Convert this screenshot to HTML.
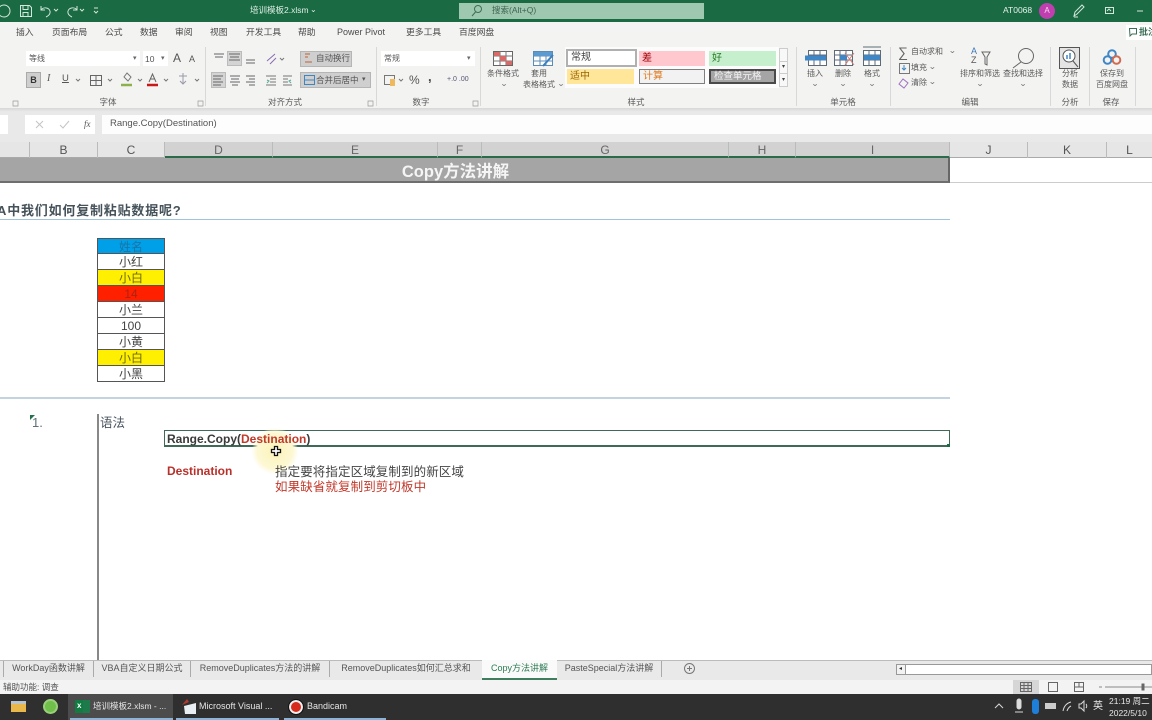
<!DOCTYPE html>
<html lang="zh"><head><meta charset="utf-8"><title>培训模板2.xlsm</title>
<style>
*{box-sizing:border-box}
html,body{margin:0;padding:0;width:1152px;height:720px;overflow:hidden;background:#fff}
body{position:relative;font-family:"Liberation Sans","Noto Sans CJK SC",sans-serif;color:#444}
.a{position:absolute;white-space:nowrap}
.r{position:absolute}
.c{position:absolute;text-align:center;white-space:nowrap}
.l{font-size:8px;line-height:10px;color:#5a5a5a}
.g{font-size:8.5px;line-height:10px;color:#5a5a5a;top:97px}
.ar{font-size:8px;line-height:10px;color:#777;transform:scaleX(1.2)}
.tab{font-size:8.8px;color:#4a4a4a;top:26px;line-height:12px}
.hd{position:absolute;top:142px;height:16px;line-height:16px;text-align:center;font-size:12px;color:#555;border-right:1px solid #bbb}
.sel{background:#d2d2d2;border-bottom:2px solid #2b6b4b;color:#666}
.cell{position:absolute;left:97px;width:68px;height:16px;line-height:16px;text-align:center;font-size:12px;color:#444;border:1px solid #555;border-top:0}
.st{position:absolute;height:15px;line-height:15px;font-size:10px;padding-left:3px}
svg{position:absolute;overflow:visible}
.sheet{position:absolute;top:661px;height:16px;line-height:14px;font-size:9px;color:#555;border-right:1px solid #aaa;text-align:center;white-space:nowrap}
</style></head><body>

<!-- title bar -->
<div class="r" style="left:0;top:0;width:1152px;height:22px;background:#1a6b43"></div>
<div class="a" style="left:250px;top:5px;font-size:8.5px;line-height:11px;color:#dfeee6">培训模板2.xlsm</div>
<div class="a" style="left:310px;top:5px;font-size:8px;line-height:10px;color:#dfeee6">⌄</div>
<div class="r" style="left:459px;top:3px;width:245px;height:16px;background:#9ec9b0"></div>
<div class="a" style="left:492px;top:5px;font-size:8.5px;line-height:11px;color:#3f6350">搜索(Alt+Q)</div>
<div class="a" style="left:1003px;top:5px;font-size:8.5px;line-height:11px;color:#e6f1eb">AT0068</div>
<div class="c" style="left:1039px;top:3px;width:16px;height:16px;border-radius:50%;background:#c03fb0;color:#f3d8ef;font-size:8px;line-height:16px">A</div>

<!-- ribbon bg -->
<div class="r" style="left:0;top:22px;width:1152px;height:86px;background:#f3f3f2"></div>
<div class="a tab" style="left:16px">插入</div><div class="a tab" style="left:52px">页面布局</div>
<div class="a tab" style="left:105px">公式</div><div class="a tab" style="left:140px">数据</div>
<div class="a tab" style="left:175px">审阅</div><div class="a tab" style="left:210px">视图</div>
<div class="a tab" style="left:246px">开发工具</div><div class="a tab" style="left:298px">帮助</div>
<div class="a tab" style="left:337px;font-size:9px">Power Pivot</div><div class="a tab" style="left:406px">更多工具</div>
<div class="a tab" style="left:459px">百度网盘</div>
<div class="r" style="left:1126px;top:25px;width:26px;height:15px;background:#fff"></div>
<svg style="left:1129px;top:28px" width="9" height="9" fill="none" stroke="#3a6d55"><path d="M.5 .5h7v5.500h-4.500l-2 2z"/></svg>
<div class="a" style="left:1139px;top:27px;font-size:9px;line-height:11px;font-weight:700;color:#3a6d55">批注</div>

<!-- input boxes -->
<div class="r" style="left:26px;top:51px;width:114px;height:15px;background:#fff"></div>
<div class="r" style="left:143px;top:51px;width:25px;height:15px;background:#fff"></div>
<div class="r" style="left:381px;top:51px;width:94px;height:15px;background:#fff"></div>
<div class="r" style="left:565px;top:47px;width:214px;height:41px;background:#fcfcfc"></div>
<div class="r" style="left:26px;top:72px;width:15px;height:16px;background:#cfcfcf;border:1px solid #aaa"></div>
<div class="r" style="left:227px;top:51px;width:15px;height:15px;background:#d4d4d4;border:1px solid #bbb"></div>
<div class="r" style="left:211px;top:72px;width:15px;height:16px;background:#d4d4d4;border:1px solid #bbb"></div>
<div class="r" style="left:300px;top:51px;width:52px;height:16px;background:#cfcfcf;border:1px solid #b5b5b5"></div>
<div class="r" style="left:300px;top:72px;width:71px;height:16px;background:#cfcfcf;border:1px solid #b5b5b5"></div>

<!-- icon layer -->
<svg style="left:0;top:0" width="1152" height="108" fill="none" stroke="#666">
<g stroke="#d5e6dc"><circle cx="4" cy="11" r="6"/><path d="M20.500 5.500h9l2 2v9h-11zM23 5.500v4h5v-4M23 16.500v-4h5v4"/>
<path d="M41 6v4h4M41 10c3-4 10-2 9 3-.5 2-2 3-4 4"/><path d="M54 9l2 2 2-2"/><path d="M77 6v4h-4M77 10c-3-4-10-2-9 3 .5 2 2 3 4 4"/><path d="M80 9l2 2 2-2"/><path d="M94 8h4M94 11l2 2 2-2"/>
<path d="M1074 16l1-4 7-7 2 2-7 7zM1074 17h4"/><rect x="1105.500" y="7.500" width="8" height="6"/><path d="M1107 11l2-2 2 2"/><path d="M1137 11h6"/></g>
<g stroke="#3e6f55"><circle cx="478" cy="9" r="3.500"/><path d="M475.500 12L472 16"/></g>
<!-- separators -->
<path stroke="#d8d8d8" d="M205.500 47v59M376.500 47v59M480.500 47v59M796.500 47v59M890.500 47v59M1050.500 47v59M1089.500 47v59M1135.500 47v59"/>
<!-- corner launchers -->
<path stroke="#999" d="M13 101h5v5h-5zM198 101h5v5h-5zM368 101h5v5h-5zM473 101h5v5h-5z" stroke-width=".7"/>
<!-- font -->
<rect x="90.500" y="75.500" width="11" height="10"/><path d="M96 75v11M90 80.500h12"/>
<path d="M127 73l4 4-3 4-4-4z" stroke="#777"/><path d="M121 85h11" stroke="#8db24c" stroke-width="2.500"/>
<path d="M147 85h11" stroke="#c81818" stroke-width="2.500"/><path d="M149 82l3.500-8 3.500 8M150.500 79h4"/>
<path d="M179 76h8M183 73v11M180 81l3 3 3-3" stroke="#99a"/>
<path d="M76 79l2 2 2-2M108 79l2 2 2-2M138 79l2 2 2-2M164 79l2 2 2-2M195 79l2 2 2-2" stroke="#777"/>
<!-- align -->
<path d="M214 54h10M215 57h8M229 54h11M230 57h9M229 60h11M246 60h9M246 63h9M213 76h10M213 79h8M213 82h10M213 85h8M230 76h10M231 79h8M230 82h10M232 85h6M246 76h9M249 79h6M246 82h9M249 85h6"/>
<path d="M266 76h10M270 79h6M270 82h6M266 85h10M283 76h9M283 79h5M283 82h5M283 85h9" stroke="#777"/><path d="M267 80l2 1-2 2M291 80l-2 1 2 2" stroke="#5a9"/>
<path d="M267 61l8-7M270 64l6-6" stroke="#8a6cb0"/><path d="M280 58l2 2 2-2" stroke="#777"/>
<rect x="304.500" y="75.500" width="10" height="9" stroke="#3f86c0"/><path d="M304 80h11" stroke="#3f86c0"/>
<path d="M305 54h5M305 57h3M305 62h7" stroke="#c06030"/>
<!-- number -->
<rect x="384.500" y="75.500" width="10" height="9" stroke="#777"/><rect x="390" y="79" width="5" height="7" fill="#eeb85f" stroke="none"/><path d="M399 79l2 2 2-2" stroke="#777"/>
<!-- conditional/table -->
<rect x="493.500" y="51.500" width="19" height="14" fill="#fff" stroke="#666"/><path d="M493 56h20M493 61h20M500 51v14M506 51v14" stroke="#777"/><rect x="494" y="52" width="6" height="4" fill="#d96a6a" stroke="none"/><rect x="500" y="56" width="6" height="5" fill="#d96a6a" stroke="none"/><rect x="506" y="61" width="6" height="4" fill="#d96a6a" stroke="none"/>
<rect x="533.500" y="51.500" width="19" height="14" fill="#fff" stroke="#5b8cb8"/><path d="M533 56h20M533 61h20M540 51v14M546 51v14" stroke="#5b8cb8"/><rect x="534" y="52" width="18" height="4" fill="#5b9bd0" stroke="none"/><path d="M543 66l10-11" stroke="#3b7fbf" stroke-width="2"/>
<!-- cells -->
<g stroke="#5d6b78"><rect x="808.500" y="50.500" width="18" height="15" fill="#fff"/><path d="M808 55h19M808 60h19M814 50v16M820 50v16"/><path d="M805 58h21" stroke="#3f86c6" stroke-width="5"/>
<rect x="834.500" y="50.500" width="18" height="15" fill="#fff"/><path d="M834 55h19M834 60h19M840 50v16M846 50v16"/><rect x="840" y="55" width="7" height="5" fill="#3f86c6" stroke="none"/><path d="M845 53l9 12M854 53l-9 12" stroke="#d07c74"/>
<rect x="863.500" y="50.500" width="17" height="15" fill="#fff"/><path d="M863 47h18M863 55h18M863 60h18M869 50v16M875 50v16"/><rect x="864" y="55" width="16" height="5" fill="#3f86c6" stroke="none"/></g>
<!-- editing -->
<rect x="899.500" y="63.500" width="10" height="10" stroke="#777"/><path d="M904 65v5M902 68l2 2 2-2" stroke="#3f86c6"/><path d="M899 84l4-5 5 4-4 5z" stroke="#a070c0"/>
<path d="M982 52h8l-3 5v8l-2-1v-7z"/><circle cx="1026" cy="56" r="7.500"/><path d="M1021 62l-8 6"/>
<!-- analysis -->
<rect x="1059.500" y="47.500" width="20" height="21" fill="#e4e4e4" stroke="#555"/><circle cx="1069" cy="56" r="6" fill="#fff" stroke="#555"/><path d="M1067 59v-4M1070 59v-6" stroke="#3f86c6" stroke-width="1.500"/><path d="M1073 61l5 6" stroke="#555"/>
<circle cx="1112" cy="54" r="3.800" stroke="#3f86c6" stroke-width="2"/><circle cx="1107.500" cy="60" r="3.800" stroke="#3f86c6" stroke-width="2"/><circle cx="1116.500" cy="60" r="3.800" stroke="#d06a50" stroke-width="2"/>
</svg>

<!-- font group text -->
<div class="a l" style="left:29px;top:54px;color:#555">等线</div><div class="a" style="left:133px;top:54px;font-size:7px;line-height:10px;color:#666">▾</div>
<div class="a l" style="left:145px;top:54px;font-size:8.500px;color:#555">10</div><div class="a" style="left:161px;top:54px;font-size:7px;line-height:10px;color:#666">▾</div>
<div class="a" style="left:173px;top:51px;font-size:12px;line-height:14px;color:#555">A</div><div class="a" style="left:189px;top:53px;font-size:9px;line-height:12px;color:#555">A</div>
<div class="c" style="left:26px;top:74px;width:15px;font-size:9px;line-height:12px;font-weight:700;color:#333">B</div>
<div class="a" style="left:47px;top:73px;font-size:10px;line-height:12px;font-style:italic;font-family:'Liberation Serif',serif;color:#555">I</div>
<div class="a" style="left:62px;top:73px;font-size:9.500px;line-height:12px;text-decoration:underline;color:#555">U</div>
<div class="c g" style="left:88px;width:40px">字体</div>
<!-- alignment text -->
<div class="a" style="left:316px;top:53px;font-size:8.500px;line-height:11px;color:#555">自动换行</div>
<div class="a" style="left:316px;top:75px;font-size:8.500px;line-height:11px;color:#555">合并后居中</div>
<div class="a" style="left:362px;top:75px;font-size:7px;line-height:10px;color:#555">▾</div>
<div class="c g" style="left:260px;width:50px">对齐方式</div>
<!-- number text -->
<div class="a l" style="left:384px;top:54px;color:#555">常规</div><div class="a" style="left:467px;top:54px;font-size:7px;line-height:10px;color:#666">▾</div>
<div class="a" style="left:409px;top:73px;font-size:12px;line-height:14px;color:#555">%</div>
<div class="a" style="left:428px;top:70px;font-size:13px;line-height:14px;font-weight:700;color:#444">,</div>
<div class="a" style="left:447px;top:75px;font-size:7px;line-height:10px;color:#557">+.0 .00</div>
<div class="c g" style="left:401px;width:40px">数字</div>
<!-- styles text -->
<div class="c l" style="left:483px;top:69px;width:40px">条件格式</div><div class="c ar" style="left:499px;top:79px;width:10px">⌄</div>
<div class="c l" style="left:519px;top:69px;width:40px">套用</div><div class="c l" style="left:519px;top:80px;width:40px">表格格式</div><div class="c ar" style="left:556px;top:79px;width:10px">⌄</div>
<div class="st" style="left:566px;top:49px;width:71px;height:18px;line-height:14px;background:#fff;border:2px solid #b0b0b0;color:#444">常规</div>
<div class="st" style="left:639px;top:51px;width:66px;background:#ffc7ce;color:#9c0006">差</div>
<div class="st" style="left:709px;top:51px;width:67px;background:#c6efce;color:#2d7a2a">好</div>
<div class="st" style="left:567px;top:69px;width:67px;background:#ffe699;color:#9c6500">适中</div>
<div class="st" style="left:639px;top:69px;width:66px;background:#f2f2f2;border:1px solid #7f7f7f;color:#e07b20;line-height:13px">计算</div>
<div class="st" style="left:709px;top:69px;width:67px;background:#a5a5a5;border:2px solid #4a4a4a;color:#f4f4f4;line-height:11px;font-size:9.500px">检查单元格</div>
<div class="r" style="left:779px;top:48px;width:9px;height:39px;background:#f8f8f8;border:1px solid #ccc"></div>
<div class="c" style="left:779px;top:61px;width:9px;height:13px;font-size:6px;line-height:11px;color:#444;border-top:1px solid #ccc;border-bottom:1px solid #ccc">▾</div>
<div class="c" style="left:779px;top:75px;width:9px;font-size:6px;line-height:10px;color:#444">▾</div>
<div class="c g" style="left:616px;width:40px">样式</div>
<!-- cells text -->
<div class="c l" style="left:803px;top:69px;width:24px">插入</div><div class="c l" style="left:831px;top:69px;width:24px">删除</div><div class="c l" style="left:860px;top:69px;width:24px">格式</div>
<div class="c ar" style="left:811px;top:79px;width:8px">⌄</div><div class="c ar" style="left:839px;top:79px;width:8px">⌄</div><div class="c ar" style="left:868px;top:79px;width:8px">⌄</div>
<div class="c g" style="left:823px;width:40px">单元格</div>
<!-- editing text -->
<div class="a" style="left:898px;top:44px;font-size:14px;line-height:16px;color:#666">∑</div>
<div class="a l" style="left:911px;top:47px">自动求和</div><div class="a ar" style="left:949px;top:46px">⌄</div>
<div class="a l" style="left:911px;top:63px">填充</div><div class="a ar" style="left:929px;top:62px">⌄</div>
<div class="a l" style="left:911px;top:78px">清除</div><div class="a ar" style="left:929px;top:77px">⌄</div>
<div class="a" style="left:971px;top:47px;font-size:9px;color:#3f78b8;line-height:9px">A<br><span style="color:#555">Z</span></div>
<div class="c l" style="left:958px;top:69px;width:44px">排序和筛选</div><div class="c l" style="left:1001px;top:69px;width:44px">查找和选择</div>
<div class="c ar" style="left:976px;top:79px;width:8px">⌄</div><div class="c ar" style="left:1019px;top:79px;width:8px">⌄</div>
<div class="c g" style="left:950px;width:40px">编辑</div>
<!-- analysis text -->
<div class="c l" style="left:1056px;top:69px;width:28px">分析</div><div class="c l" style="left:1056px;top:80px;width:28px">数据</div>
<div class="c l" style="left:1090px;top:69px;width:44px">保存到</div><div class="c l" style="left:1090px;top:80px;width:44px">百度网盘</div>
<div class="c g" style="left:1055px;width:30px">分析</div>
<div class="c g" style="left:1096px;width:30px">保存</div>

<!-- formula bar -->
<div class="r" style="left:0;top:108px;width:1152px;height:34px;background:#e9e9e9"></div>
<div class="r" style="left:0;top:108px;width:1152px;height:4px;background:linear-gradient(#d6d6d6,#ebebeb)"></div>
<div class="r" style="left:0;top:115px;width:8px;height:19px;background:#fff"></div>
<div class="r" style="left:25px;top:115px;width:70px;height:19px;background:#fff"></div>
<div class="r" style="left:102px;top:115px;width:1050px;height:19px;background:#fdfdfd"></div>
<div class="a" style="left:110px;top:118px;font-size:9.500px;line-height:12px;color:#555">Range.Copy(Destination)</div>
<svg style="left:0;top:0" width="100" height="134" fill="none" stroke="#c4c4c4"><path d="M36 121l7 7M43 121l-7 7M60 125l3 3 6-7"/></svg>
<div class="a" style="left:84px;top:118px;font-size:9px;line-height:12px;font-style:italic;font-family:'Liberation Serif',serif;color:#555">fx</div>

<!-- column headers -->
<div class="r" style="left:0;top:142px;width:1152px;height:16px;background:#e6e6e6;border-bottom:1px solid #aaa"></div>
<div class="hd" style="left:0;width:30px"></div>
<div class="hd" style="left:30px;width:68px">B</div><div class="hd" style="left:98px;width:67px">C</div>
<div class="hd sel" style="left:165px;width:108px">D</div><div class="hd sel" style="left:273px;width:165px">E</div>
<div class="hd sel" style="left:438px;width:44px">F</div><div class="hd sel" style="left:482px;width:247px">G</div>
<div class="hd sel" style="left:729px;width:67px">H</div><div class="hd sel" style="left:796px;width:154px">I</div>
<div class="hd" style="left:950px;width:78px">J</div><div class="hd" style="left:1028px;width:79px">K</div><div class="hd" style="left:1107px;width:45px;border:0">L</div>

<!-- sheet -->
<div class="r" style="left:0;top:158px;width:950px;height:25px;background:#a5a5a5;border-bottom:2px solid #6e6e6e;border-right:2px solid #666"></div>
<div class="r" style="left:950px;top:182px;width:202px;height:1px;background:#ccc"></div>
<div class="c" style="left:0;top:161px;width:911px;font-size:16.500px;font-weight:700;color:#f5f5f5;line-height:22px">Copy方法讲解</div>
<div class="a" style="left:-3px;top:203px;font-size:13px;line-height:16px;font-weight:700;color:#45525a;letter-spacing:.8px">A中我们如何复制粘贴数据呢?</div>
<div class="r" style="left:0;top:219px;width:950px;height:1px;background:#9fc5da"></div>

<div class="cell" style="top:238px;background:#00a0e8;color:#1775a8;border-top:1px solid #555">姓名</div>
<div class="cell" style="top:254px;background:#fff">小红</div>
<div class="cell" style="top:270px;background:#ffef00;color:#6f6a10">小白</div>
<div class="cell" style="top:286px;background:#ff2000;color:#b02010">14</div>
<div class="cell" style="top:302px;background:#fff">小兰</div>
<div class="cell" style="top:318px;background:#fff">100</div>
<div class="cell" style="top:334px;background:#fff">小黄</div>
<div class="cell" style="top:350px;background:#ffef00;color:#6f6a10">小白</div>
<div class="cell" style="top:366px;background:#fff">小黑</div>

<div class="r" style="left:0;top:397px;width:950px;height:2px;background:#c3d3e0"></div>
<div class="r" style="left:30px;top:415px;width:0;height:0;border-top:5px solid #217346;border-right:5px solid transparent"></div>
<div class="a" style="left:32px;top:415px;font-size:13px;line-height:16px;color:#607078">1.</div>
<div class="r" style="left:97px;top:414px;width:2px;height:246px;background:#888"></div>
<div class="a" style="left:100px;top:415px;font-size:12.500px;line-height:16px;color:#4a5560">语法</div>
<div class="r" style="left:164px;top:430px;width:786px;height:17px;background:#fff;border:1px solid #3f6a58;border-width:1px 1px 2px 1px"></div>
<div class="r" style="left:947px;top:444px;width:3px;height:3px;background:#1f6b47"></div>
<div class="r" style="left:252px;top:428px;width:46px;height:46px;border-radius:50%;background:radial-gradient(circle,#fbf3b8 0,#fdf8d4 55%,rgba(255,255,255,0) 72%)"></div>
<div class="a" style="left:167px;top:432px;font-size:12px;line-height:14px;font-weight:700;color:#3a3a3a">Range.Copy(<span style="color:#c0392b">Destination</span>)</div>
<svg style="left:270px;top:445px" width="13" height="13" fill="#fff" stroke="#111" stroke-width="1.300"><path d="M4.500 1.500h3v3h3v3h-3v3h-3v-3h-3v-3h3z"/></svg>
<div class="a" style="left:167px;top:464px;font-size:12px;line-height:14px;font-weight:700;color:#b8302a">Destination</div>
<div class="a" style="left:275px;top:464px;font-size:12.500px;line-height:16px;color:#444;letter-spacing:.1px">指定要将指定区域复制到的新区域</div>
<div class="a" style="left:275px;top:479px;font-size:12.500px;line-height:16px;color:#c0392b;letter-spacing:.1px">如果缺省就复制到剪切板中</div>

<!-- sheet tabs -->
<div class="r" style="left:0;top:660px;width:1152px;height:20px;background:#e9e9e9;border-top:1px solid #bbb"></div>
<div class="sheet" style="left:3px;width:91px;border-left:1px solid #aaa">WorkDay函数讲解</div>
<div class="sheet" style="left:94px;width:97px">VBA自定义日期公式</div>
<div class="sheet" style="left:191px;width:139px">RemoveDuplicates方法的讲解</div>
<div class="sheet" style="left:330px;width:152px;border:0">RemoveDuplicates如何汇总求和</div>
<div class="r" style="left:482px;top:660px;width:75px;height:20px;background:#fafafa;border-bottom:2px solid #3f7d5f"></div>
<div class="c" style="left:482px;top:662px;width:75px;font-size:9px;line-height:13px;color:#2e7a55">Copy方法讲解</div>
<div class="sheet" style="left:557px;width:105px">PasteSpecial方法讲解</div>
<svg style="left:683px;top:662px" width="14" height="13" fill="none" stroke="#777"><circle cx="6.500" cy="6.500" r="5"/><path d="M4 6.500h5M6.500 4v5"/></svg>
<div class="r" style="left:896px;top:664px;width:256px;height:11px;background:#fff;border:1px solid #999"></div>
<div class="r" style="left:897px;top:665px;width:9px;height:9px;background:#f2f2f2;border-right:1px solid #999"></div>
<div class="a" style="left:899px;top:665px;font-size:6px;line-height:9px;color:#333">◂</div>

<!-- status bar -->
<div class="r" style="left:0;top:680px;width:1152px;height:14px;background:#f3f3f3"></div>
<div class="a" style="left:3px;top:681px;font-size:8.500px;line-height:12px;color:#555">辅助功能: 调查</div>
<div class="r" style="left:1013px;top:680px;width:26px;height:14px;background:#d6d6d6"></div>
<svg style="left:1018px;top:680px" width="134" height="14" fill="none" stroke="#666"><path d="M2.500 2.500h11v9h-11zM2 5.500h12M2 8.500h12M6 2v9M10 2v9"/><rect x="30.500" y="2.500" width="9" height="9"/><path d="M56.500 2.500h9v9h-9zM61 2v5M57 7h8"/><path d="M81 7h3M87 7h47" stroke="#888"/><rect x="124" y="4" width="2" height="6" fill="#666"/></svg>

<!-- taskbar -->
<div class="r" style="left:0;top:694px;width:1152px;height:26px;background:#2f2f2f"></div>
<div class="r" style="left:11px;top:701px;width:15px;height:11px;background:#e8b94a;border-top:3px solid #b8c4cc"></div>
<div class="r" style="left:43px;top:699px;width:15px;height:15px;border-radius:50%;background:#6fbf4a;border:2px solid #9ad07a"></div>
<div class="r" style="left:68px;top:694px;width:105px;height:26px;background:#4c4c4c"></div>
<div class="r" style="left:75px;top:700px;width:15px;height:13px;background:#1e7a4a"></div>
<div class="r" style="left:75px;top:700px;width:8px;height:13px;background:#107c41"></div>
<div class="a" style="left:77px;top:701px;font-size:8px;line-height:10px;font-weight:700;color:#fff">x</div>
<div class="a" style="left:93px;top:701px;font-size:8.500px;line-height:11px;color:#e6e6e6">培训模板2.xlsm - ...</div>
<svg style="left:182px;top:697px" width="16" height="20"><path d="M2 9l12-3v11H3z" fill="#e8eef2"/><path d="M0 8l5-6 2 3z" fill="#b03a2e"/></svg>
<div class="a" style="left:199px;top:700px;font-size:9px;line-height:12px;color:#e6e6e6">Microsoft Visual ...</div>
<div class="r" style="left:289px;top:700px;width:14px;height:14px;border-radius:50%;background:#d62a1d;border:2px solid #eee;outline:1px solid #111"></div>
<div class="a" style="left:307px;top:700px;font-size:9px;line-height:12px;color:#e6e6e6">Bandicam</div>
<div class="r" style="left:70px;top:718px;width:103px;height:2px;background:#8ab4d8"></div>
<div class="r" style="left:176px;top:718px;width:103px;height:2px;background:#8ab4d8"></div>
<div class="r" style="left:284px;top:718px;width:102px;height:2px;background:#8ab4d8"></div>
<svg style="left:0;top:694px" width="1152" height="26" fill="none" stroke="#d8d8d8"><path d="M995 14l4-4 4 4"/><rect x="1017" y="5" width="4" height="10" rx="2" fill="#ddd"/><path d="M1015 18h8"/><rect x="1032" y="5" width="7" height="15" rx="3" fill="#1f7fd8" stroke="none"/><rect x="1045" y="9" width="11" height="6" fill="#ccc" stroke="none"/><path d="M1063 17c1-5 4-8 8-9M1067 17c1-3 2-4 4-5"/><path d="M1079 10h2l3-3v10l-3-3h-2zM1086 10c1 1 1 3 0 4"/></svg>
<div class="a" style="left:1093px;top:700px;font-size:10px;line-height:13px;color:#e8e8e8">英</div>
<div class="a" style="left:1109px;top:695px;font-size:8.500px;color:#e6e6e6;line-height:12px">21:19 周二<br>2022/5/10</div>

</body></html>
